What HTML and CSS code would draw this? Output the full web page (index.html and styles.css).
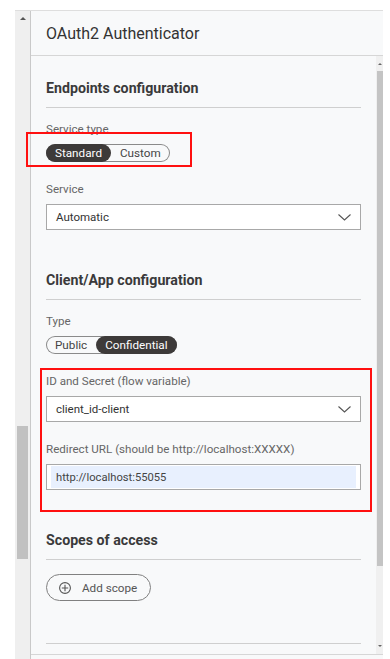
FILE: index.html
```html
<!DOCTYPE html>
<html lang="en">
<head>
<meta charset="utf-8">
<title>OAuth2 Authenticator</title>
<link rel="stylesheet" href="styles.css">
</head>
<body>
<div class="app">
  <div class="rail">
    <span class="rail-up"></span>
    <span class="rail-thumb"></span>
  </div>
  <div class="panel">
    <header class="head">OAuth2 Authenticator</header>
    <div class="main">
      <div class="content">
        <h2 class="section-title">Endpoints configuration</h2>
        <div class="field first">
          <div class="label">Service type</div>
          <div class="seg"><span class="on">Standard</span><span>Custom</span></div>
        </div>
        <div class="field">
          <div class="label">Service</div>
          <div class="select"><span>Automatic</span>
            <svg class="chev" width="13" height="7" viewBox="0 0 13 7"><path d="M0.5 0.5 L6.5 6 L12.5 0.5" fill="none" stroke="#555" stroke-width="1.1"/></svg>
          </div>
        </div>

        <h2 class="section-title next">Client/App configuration</h2>
        <div class="field first">
          <div class="label">Type</div>
          <div class="seg"><span>Public</span><span class="on">Confidential</span></div>
        </div>
        <div class="field">
          <div class="label">ID and Secret (flow variable)</div>
          <div class="select"><span>client_id-client</span>
            <svg class="chev" width="13" height="7" viewBox="0 0 13 7"><path d="M0.5 0.5 L6.5 6 L12.5 0.5" fill="none" stroke="#555" stroke-width="1.1"/></svg>
          </div>
        </div>
        <div class="field">
          <div class="label">Redirect URL (should be http://localhost:XXXXX)</div>
          <div class="input"><div class="input-fill">http://localhost:55055</div></div>
        </div>

        <h2 class="section-title next">Scopes of access</h2>
        <button class="btn" type="button">
          <svg width="12" height="12" viewBox="0 0 12 12"><circle cx="6" cy="6" r="5.4" fill="none" stroke="#555" stroke-width="1.1"/><path d="M6 2.8 V9.2 M2.8 6 H9.2" stroke="#555" stroke-width="1.1"/></svg>
          <span>Add scope</span>
        </button>
        <div class="rule"></div>
      </div>
      <div class="vscroll">
        <span class="vs-up"></span>
        <span class="vs-thumb"></span>
        <span class="vs-down"></span>
      </div>
    </div>
  </div>
</div>
<div class="mark mark-1"></div>
<div class="mark mark-2"></div>
</body>
</html>
```
FILE: styles.css
```css
html, body {
  margin: 0;
  height: 100%;
  background: #ffffff;
  overflow: hidden;
}
body {
  font-family: Roboto, "Liberation Sans", Arial, sans-serif;
  position: relative;
}
.app {
  display: flex;
  margin: 10px 0 0 15px;
  width: 368px;
  height: 649px;
  border-top: 1px solid #dedede;
}
.rail {
  width: 15px;
  background: #efefef;
  border-right: 1px solid #c9c9c9;
  display: flex;
  flex-direction: column;
  align-items: center;
}
.rail-up {
  margin-top: 6px;
  width: 0;
  height: 0;
  border-left: 3px solid transparent;
  border-right: 3px solid transparent;
  border-bottom: 3px solid #555;
}
.rail-thumb {
  margin-top: 406px;
  width: 11px;
  height: 133px;
  background: #c1c1c1;
}
.panel {
  flex: 1;
  display: flex;
  flex-direction: column;
  background: #f8f9fa;
}
.head {
  height: 44px;
  border-bottom: 1px solid #d6d6d6;
  display: flex;
  align-items: center;
  padding-left: 15px;
  font-size: 16px;
  color: #333;
}
.main {
  display: flex;
  height: 598px;
  border-bottom: 1px solid #d6d6d6;
}
.content {
  flex: 1;
  padding: 22px 15px 0;
}
.section-title {
  margin: 0;
  font-size: 14.2px;
  font-weight: 700;
  line-height: 20px;
  color: #3a3a3a;
  padding-bottom: 9px;
  border-bottom: 1px solid #cfcfcf;
}
.section-title.next {
  margin-top: 40px;
}
.field {
  margin-top: 20px;
}
.field.first {
  margin-top: 14px;
}
.label {
  font-size: 11.6px;
  line-height: 14px;
  color: #666;
  margin-bottom: 8px;
}
.seg {
  display: flex;
  width: fit-content;
  height: 18px;
  border-radius: 9px;
  box-shadow: inset 0 0 0 1px #8a8a8a;
  font-size: 11.7px;
  color: #444;
}
.seg span {
  padding: 0 9px;
  line-height: 18px;
  border-radius: 9px;
}
.seg .on {
  background: #3d3a39;
  color: #fff;
}
.select {
  height: 26px;
  box-sizing: border-box;
  border: 1px solid #a8a8a8;
  background: #fff;
  display: flex;
  align-items: center;
  justify-content: space-between;
  padding: 0 9px;
  font-size: 11.5px;
  color: #333;
}
.chev {
  display: block;
}
.input {
  height: 26px;
  box-sizing: border-box;
  border: 1px solid #a8a8a8;
  background: #fff;
  padding: 1px 4px;
}
.input-fill {
  height: 100%;
  background: #e8f0fe;
  padding-left: 5px;
  display: flex;
  align-items: center;
  font-size: 11.2px;
  color: #444;
}
.btn {
  margin-top: 14px;
  display: flex;
  width: fit-content;
  align-items: center;
  height: 27px;
  box-sizing: border-box;
  border: 1px solid #808080;
  border-radius: 14px;
  padding: 0 13px 0 12px;
  gap: 11px;
  font-family: inherit;
  font-size: 11.7px;
  color: #555;
  background: transparent;
}
.btn svg {
  display: block;
}
.rule {
  margin-top: 42px;
  border-top: 1px solid #cfcfcf;
}
.vscroll {
  width: 7px;
  background: #f0f0f0;
  display: flex;
  flex-direction: column;
  align-items: center;
}
.vs-up {
  margin-top: 7px;
  border-left: 2px solid transparent;
  border-right: 2px solid transparent;
  border-bottom: 2px solid #666;
}
.vs-thumb {
  margin-top: 6px;
  width: 6px;
  height: 495px;
  background: #c4c4c4;
}
.vs-down {
  margin-top: auto;
  margin-bottom: 7px;
  border-left: 2px solid transparent;
  border-right: 2px solid transparent;
  border-top: 2px solid #666;
}
.mark {
  position: absolute;
  border: 2px solid #ff1010;
  box-sizing: border-box;
  pointer-events: none;
}
.mark-1 {
  left: 26px;
  top: 132px;
  width: 166px;
  height: 35px;
}
.mark-2 {
  left: 40px;
  top: 368px;
  width: 332px;
  height: 144px;
}
```
